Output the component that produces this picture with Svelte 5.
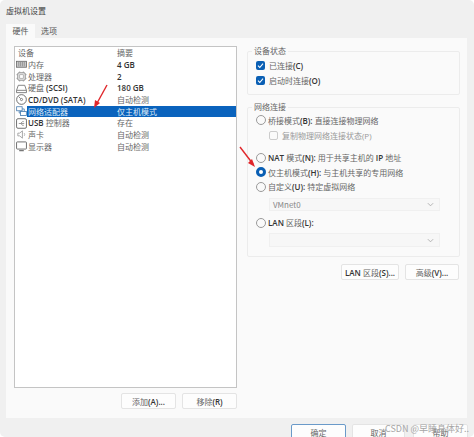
<script>
	const devices = [
		{ name: '内存', summary: '4 GB', icon: 'ram' },
		{ name: '处理器', summary: '2', icon: 'cpu' },
		{ name: '硬盘 (SCSI)', summary: '180 GB', icon: 'disk' },
		{ name: 'CD/DVD (SATA)', summary: '自动检测', icon: 'cd' },
		{ name: '网络适配器', summary: '仅主机模式', icon: 'net', selected: true },
		{ name: 'USB 控制器', summary: '存在', icon: 'usb' },
		{ name: '声卡', summary: '自动检测', icon: 'sound' },
		{ name: '显示器', summary: '自动检测', icon: 'screen' }
	];

	// latin text reads heavier than the chinese in the reference, so split them
	function split(text) {
		return text.split(/([\u4e00-\u9fff]+)/).filter(Boolean);
	}
	function isZh(part) {
		return /[\u4e00-\u9fff]/.test(part);
	}
</script>

{#snippet mixed(text)}
	{#each split(text) as part}<span class={isZh(part) ? 'zh' : 'la'}>{part}</span>{/each}
{/snippet}

{#snippet tick()}
	<span class="check"><svg viewBox="0 0 10 10"><path d="M2.2 5.2 4.2 7.2 7.8 3" fill="none" stroke="#fff" stroke-width="1.2" /></svg></span>
{/snippet}

{#snippet chevron()}
	<svg viewBox="0 0 8 5"><path d="M1 1l3 3 3-3" fill="none" stroke="#aaa" /></svg>
{/snippet}

<div class="window">
	<div class="title">虚拟机设置</div>
	<div class="tabs">
		<div class="tab active">硬件</div>
		<div class="tab">选项</div>
	</div>

	<div class="panel">
		<div class="left">
			<div class="list">
				<div class="row head">
					<span class="col-name">设备</span>
					<span class="col-sum">摘要</span>
				</div>
				{#each devices as d}
					<div class="row">
						<svg class="icon" viewBox="0 0 12 12" fill="none" stroke="#6b6b6b" stroke-width="0.9">
							{#if d.icon === 'ram'}
								<rect x="0.5" y="2.5" width="11" height="6.5" fill="#c9c9c9" />
								<path d="M3 3v5M5 3v5M7 3v5M9 3v5" stroke="#8a8a8a" />
							{:else if d.icon === 'cpu'}
								<rect x="2" y="2" width="8" height="8" rx="1" />
								<rect x="4" y="4" width="4" height="4" stroke="#a5a5a5" />
								<path d="M4 .5v1.5M8 .5v1.5M4 10v1.5M8 10v1.5M.5 4H2M.5 8H2M10 4h1.5M10 8h1.5" stroke="#999" />
							{:else if d.icon === 'disk'}
								<path d="M.6 8 2.5 2.5h7L11.4 8v2.5H.6z" />
								<path d="M.6 8h10.8" />
							{:else if d.icon === 'cd'}
								<circle cx="6" cy="6" r="5.3" stroke="#555" />
								<circle cx="6" cy="6" r="1.2" />
								<path d="m3 3 2 2" />
							{:else if d.icon === 'net'}
								<rect x="0.7" y="0.8" width="6" height="4.4" stroke="#4c7fb0" />
								<rect x="5" y="6" width="6.3" height="4.4" stroke="#4c7fb0" />
								<path d="M3.5 5.2v2.5H5M9 6V3.2H6.7" stroke="#4c7fb0" />
							{:else if d.icon === 'usb'}
								<rect x="0.6" y="0.8" width="10.8" height="10.4" rx="1.5" stroke="#555" />
								<path d="M3 6h6M5 6l2-2h1.5M5.5 6l1.5 2h1.5" stroke="#888" />
							{:else if d.icon === 'sound'}
								<path d="M2 4.5h2L7 2v8L4 7.5H2z" stroke="#999" />
								<path d="M9 4.5q1 1.5 0 3" stroke="#aaa" />
							{:else}
								<rect x="0.6" y="1" width="10.8" height="7.8" rx="0.8" stroke="#555" />
								<path d="M3.5 10.6h5" stroke="#777" stroke-width="1.3" />
							{/if}
						</svg>
						<span class="col-name" class:sel={d.selected}>{@render mixed(d.name)}</span>
						<span class="col-sum" class:sel={d.selected}>{@render mixed(d.summary)}</span>
					</div>
				{/each}
			</div>
			<div class="btn-row">
				<button>{@render mixed('添加(A)...')}</button>
				<button>{@render mixed('移除(R)')}</button>
			</div>
		</div>

		<div class="right">
			<fieldset class="status">
				<legend>设备状态</legend>
				<div class="opt">{@render tick()}<span>{@render mixed('已连接(C)')}</span></div>
				<div class="opt">{@render tick()}<span>{@render mixed('启动时连接(O)')}</span></div>
			</fieldset>

			<fieldset class="network">
				<legend>网络连接</legend>
				<div class="opt"><span class="radio"></span><span>{@render mixed('桥接模式(B): 直接连接物理网络')}</span></div>
				<div class="opt sub"><span class="check off"></span><span>{@render mixed('复制物理网络连接状态(P)')}</span></div>
				<div class="opt nat"><span class="radio"></span><span>{@render mixed('NAT 模式(N): 用于共享主机的 IP 地址')}</span></div>
				<div class="opt"><span class="radio on"></span><span>{@render mixed('仅主机模式(H): 与主机共享的专用网络')}</span></div>
				<div class="opt"><span class="radio"></span><span>{@render mixed('自定义(U): 特定虚拟网络')}</span></div>
				<div class="select first">VMnet0{@render chevron()}</div>
				<div class="opt"><span class="radio"></span><span>{@render mixed('LAN 区段(L):')}</span></div>
				<div class="select second">{@render chevron()}</div>
			</fieldset>

			<div class="btn-row right-btns">
				<button class="lan">{@render mixed('LAN 区段(S)...')}</button>
				<button class="adv">{@render mixed('高级(V)...')}</button>
			</div>
		</div>
	</div>

	<div class="footer">
		<button class="primary">{@render mixed('确定')}</button>
		<button class="cancel">{@render mixed('取消')}</button>
		<button>{@render mixed('帮助')}</button>
	</div>

	<!-- annotations drawn on top of the screenshot -->
	<svg class="marks" viewBox="0 0 474 437">
		<path d="M107 85 96 105" stroke="#e0262a" stroke-width="1.4" fill="none" />
		<path d="M94 108 95 100 100 103z" fill="#e0262a" />
		<path d="M240 147 253 164" stroke="#e0262a" stroke-width="1.4" fill="none" />
		<path d="M255 167 248 163 252 159z" fill="#e0262a" />
	</svg>
	<div class="watermark">CSDN @早睡身体好..</div>
</div>

<style>
	:global(body) {
		margin: 0;
		background: #fff;
	}

	.window {
		position: relative;
		width: 474px;
		height: 437px;
		overflow: hidden;
		background: #f0f0f0;
		border-radius: 5px;
		font-family: "Noto Sans CJK SC", "Open Sans", sans-serif;
		font-size: 8px;
		color: #666;
	}

	.zh {
		font-weight: 400;
		color: #666;
	}

	.la {
		font-family: "Open Sans", "Noto Sans CJK SC", sans-serif;
		font-weight: 600;
		color: #333;
		white-space: pre;
	}

	.title {
		height: 24px;
		padding-left: 6px;
		line-height: 21px;
		color: #444;
	}

	.tabs {
		display: flex;
		height: 14px;
		padding-left: 6px;
	}

	.tab {
		width: 28px;
		text-align: center;
		line-height: 14px;
		color: #555;
	}

	.tab.active {
		width: 29px;
		background: #fafafa;
	}

	.panel {
		display: flex;
		gap: 10px;
		width: 461px;
		height: 380px;
		margin-left: 6px;
		padding: 8px 7px 0 8px;
		box-sizing: border-box;
		background: #fafafa;
	}

	.left {
		width: 223px;
	}

	.list {
		height: 342px;
		box-sizing: border-box;
		padding: 0 0 0 1px;
		background: #fff;
		border: 1px solid #c4c4c4;
	}

	.row {
		display: flex;
		align-items: center;
		height: 11.68px;
		white-space: nowrap;
	}

	.row.head {
		height: 12px;
		padding-left: 1px;
	}

	.icon {
		flex: none;
		width: 11px;
		height: 11px;
	}

	.col-name {
		width: 88px;
		padding-left: 1px;
		line-height: 11.68px;
	}

	.head .col-name {
		width: 98px;
	}

	.col-sum {
		flex: 1;
		padding-left: 1px;
		line-height: 11.68px;
	}

	.sel {
		background: #0a63bd;
	}

	.sel .zh,
	.sel .la {
		color: #dfeaf6;
	}

	.btn-row {
		display: flex;
		justify-content: flex-end;
		gap: 6px;
		margin-top: 5px;
	}

	button {
		width: 55px;
		height: 16px;
		padding: 0;
		background: #fdfdfd;
		border: 1px solid #e4e4e4;
		border-radius: 2px;
		font: inherit;
	}

	.right {
		width: 213px;
	}

	fieldset {
		margin: 0;
		padding: 0;
		background: #fafafa;
		border: 1px solid #ececec;
		border-radius: 2px;
		box-sizing: border-box;
	}

	legend {
		margin-left: -4px;
		padding: 0 2px;
		line-height: 10px;
		color: #666;
	}

	.status {
		height: 49px;
		padding: 2.25px 0 0 8px;
	}

	.network {
		height: 155px;
		margin-top: 7px;
		padding: 1px 0 0 8px;
	}

	.opt {
		display: flex;
		align-items: center;
		gap: 2px;
		height: 14.5px;
		white-space: nowrap;
	}

	.sub {
		margin: 1px 0 0 13px;
	}

	.sub .zh,
	.sub .la {
		font-weight: 400;
		color: #999;
	}

	.nat {
		margin-top: 7.25px;
	}

	.check {
		display: flex;
		flex: none;
		width: 9px;
		height: 9px;
		margin-right: 2px;
		background: #0a5fb4;
		border-radius: 2px;
	}

	.check.off {
		background: #fafafa;
		border: 1px solid #ccc;
		box-sizing: border-box;
	}

	.radio {
		flex: none;
		width: 10px;
		height: 10px;
		box-sizing: border-box;
		background: #fafafa;
		border: 1px solid #9a9a9a;
		border-radius: 50%;
	}

	.radio.on {
		background: #fff;
		border: 3px solid #0a5fb4;
	}

	.select {
		display: flex;
		align-items: center;
		justify-content: space-between;
		width: 171px;
		box-sizing: border-box;
		margin-left: 13px;
		padding: 0 5px 0 3px;
		color: #888;
		background: #f7f7f7;
		border: 1px solid #f0f0f0;
	}

	.first {
		height: 13px;
		margin-top: 4px;
		margin-bottom: 4.75px;
	}

	.second {
		justify-content: flex-end;
		height: 14px;
		margin-top: 3px;
	}

	.select svg {
		width: 7px;
		height: 5px;
	}

	.right-btns {
		margin-top: 7px;
		margin-right: 1px;
	}

	.lan {
		width: 58px;
	}

	.adv {
		width: 54px;
	}

	.footer {
		display: flex;
		justify-content: flex-end;
		gap: 6px;
		padding: 6px 6px 0 0;
	}

	.footer button {
		width: 55px;
		height: 17px;
	}

	.footer .cancel {
		width: 53px;
		margin-right: 2px;
	}

	.footer .primary {
		border-color: #6a9ac9;
	}

	.marks {
		position: absolute;
		inset: 0;
		pointer-events: none;
	}

	.watermark {
		position: absolute;
		top: 423px;
		left: 385px;
		font-size: 9px;
		line-height: 11px;
		color: #a5a5a5;
		white-space: nowrap;
	}
</style>
